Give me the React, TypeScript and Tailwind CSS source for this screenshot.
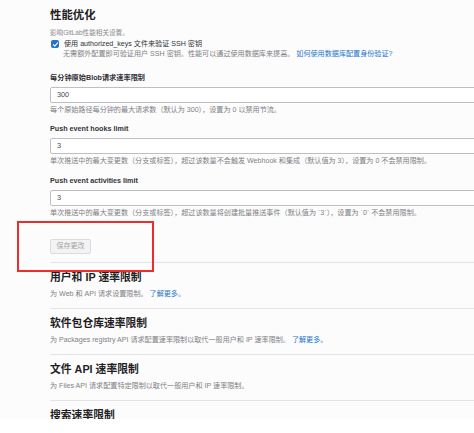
import React from "react";

const font = {
  fontFamily: '"Liberation Sans", "Noto Sans CJK SC", sans-serif',
};

const Help: React.FC<{ children: React.ReactNode; className?: string }> = ({
  children,
  className = "",
}) => (
  <p
    className={`h-[10px] whitespace-nowrap text-[7.1px] leading-[10px] text-[#807f85] ${className}`}
  >
    {children}
  </p>
);

const Field: React.FC<{ label: string; value: string; help: React.ReactNode; top: string }> = ({
  label,
  value,
  help,
  top,
}) => (
  <div className={top}>
    <p className="h-[10px] whitespace-nowrap text-[7.2px] font-bold leading-[10px] text-[#333238]">
      {label}
    </p>
    <div className="mt-[4px] flex h-[16px] w-[440px] items-center rounded-[2px] border border-[#bfbfc3] bg-white px-[6px] text-[7.3px] text-[#4a484f]">
      {value}
    </div>
    <Help className="mt-[2px]">{help}</Help>
  </div>
);

const Section: React.FC<{ title: string; children?: React.ReactNode }> = ({ title, children }) => (
  <div className="w-[440px] border-t border-[#e4e4e6] pt-[7px] pb-[9px]">
    <h2 className="h-[14px] whitespace-nowrap text-[10.8px] font-bold leading-[14px] text-[#1f1e24]">
      {title}
    </h2>
    {children && <Help className="mt-[5px]">{children}</Help>}
  </div>
);

const Link: React.FC<{ children: React.ReactNode }> = ({ children }) => (
  <span className="text-[#1f75cb]">{children}</span>
);

export default function App() {
  return (
    <div className="h-[433px] w-[474px] overflow-hidden bg-white" style={font}>
      <div className="relative h-[419px] overflow-hidden bg-[#fcfcfc] pl-[50px]">
        <h1 className="mt-[7px] h-[16px] text-[11.4px] font-bold leading-[16px] text-[#1f1e24]">
          性能优化
        </h1>
        <p className="mt-[5px] h-[10px] text-[6.6px] leading-[10px] text-[#8a898e]">
          影响GitLab性能相关设置。
        </p>
        <div className="mt-[1px] flex h-[10px] items-center gap-[5px] pl-[1px]">
          <span className="flex h-[8px] w-[8px] items-center justify-center rounded-[2px] bg-[#1f75cb]">
            <svg viewBox="0 0 10 10" className="h-[7px] w-[7px]">
              <path d="M2 5.2l2 2 4-4.4" fill="none" stroke="#fff" strokeWidth="1.6" strokeLinecap="round" strokeLinejoin="round" />
            </svg>
          </span>
          <span className="whitespace-nowrap text-[7.1px] leading-[10px] text-[#333238]">
            使用 authorized_keys 文件来验证 SSH 密钥
          </span>
        </div>
        <Help className="pl-[13px]">
          无需额外配置即可验证用户 SSH 密钥。性能可以通过使用数据库来提高。{"  "}
          <Link>如何使用数据库配置身份验证?</Link>
        </Help>

        <Field
          top="mt-[14px]"
          label="每分钟原始Blob请求速率限制"
          value="300"
          help="每个原始路径每分钟的最大请求数（默认为 300），设置为 0 以禁用节流。"
        />
        <Field
          top="mt-[9px]"
          label="Push event hooks limit"
          value="3"
          help="单次推送中的最大变更数（分支或标签），超过该数量不会触发 Webhook 和集成（默认值为 3），设置为 0 不会禁用限制。"
        />
        <Field
          top="mt-[10px]"
          label="Push event activities limit"
          value="3"
          help="单次推送中的最大变更数（分支或标签），超过该数量将创建批量推送事件（默认值为 `3`），设置为 `0` 不会禁用限制。"
        />

        <button className="mt-[21px] flex h-[15px] w-[41px] items-center justify-center rounded-[2px] border border-[#dcdcde] bg-[#f3f3f4] text-[7px] text-[#a4a3a8]">
          保存更改
        </button>

        <div className="mt-[8px]">
          <Section title="用户和 IP 速率限制">
            为 Web 和 API 请求设置限制。 <Link>了解更多。</Link>
          </Section>
          <Section title="软件包仓库速率限制">
            为 Packages registry API 请求配置速率限制以取代一般用户和 IP 速率限制。 <Link>了解更多。</Link>
          </Section>
          <Section title="文件 API 速率限制">
            为 Files API 请求配置特定限制以取代一般用户和 IP 速率限制。
          </Section>
          <Section title="搜索速率限制" />
        </div>

        <div className="absolute left-[17px] top-[221px] h-[51px] w-[137px] border-2 border-[#ec2d2a]" />
      </div>
    </div>
  );
}
